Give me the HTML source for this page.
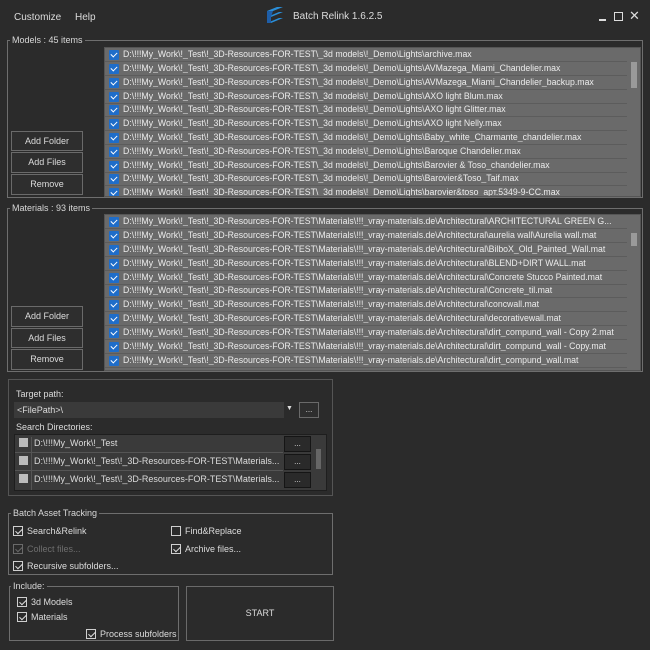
<!DOCTYPE html><html><head><style>
*{margin:0;padding:0;box-sizing:border-box}
body{width:650px;height:650px;background:#2b2b2b;font-family:"Liberation Sans",sans-serif;color:#dcdcdc;position:relative;overflow:hidden;font-size:9px}
.a{position:absolute;white-space:nowrap}
.t{white-space:nowrap;display:inline-block;transform-origin:0 50%}
.grp{position:absolute;border:1px solid #6e6e6e}
.lbl{position:absolute;background:#2b2b2b;padding:0 2px;white-space:nowrap;font-size:9px;color:#d8d8d8}
.btn{position:absolute;border:1px solid #6a6a6a;background:#2e2e2e;text-align:center;color:#dcdcdc;font-size:9px}
.list{position:absolute;background:#6a6a6a;overflow:hidden;border:1px solid #555}
.row{position:absolute;left:0;right:13px;height:14px;border-bottom:1px solid #5c5c5c}
.cb{position:absolute;left:4px;top:2px;width:10px;height:10px;background:#1f6dc9;border-radius:1px}
.cb:after{content:"";position:absolute;left:3px;top:1px;width:3px;height:5px;border:solid #fff;border-width:0 1.3px 1.3px 0;transform:rotate(45deg)}
.row .t{position:absolute;left:18px;top:1px;font-size:9px;color:#ececec;transform:scaleX(.97)}
.sb{position:absolute;right:0;top:0;bottom:0;width:13px;background:#6a6a6a}
.th{position:absolute;right:3px;width:6px;background:#9a9a9a}
.ck{position:absolute;width:10px;height:10px;border:1px solid #cfcfcf}
.ck.on:after{content:"";position:absolute;left:2.5px;top:0px;width:3px;height:6px;border:solid #e0e0e0;border-width:0 1.3px 1.3px 0;transform:rotate(45deg)}
.ck.dis{border-color:#6a6a6a}.ck.dis:after{border-color:#6a6a6a}
</style></head><body>
<div class="a" style="left:14px;top:12px;font-size:10px">Customize</div>
<div class="a" style="left:75px;top:12px;font-size:10px">Help</div>
<svg class="a" style="left:263px;top:6px" width="24" height="20" viewBox="0 0 24 20"><path d="M4 5 L14 1 L20 1 L10 5Z M4 11 L16 6 L20 6 L8 11Z M4 17 L16 12 L20 12 L8 17Z" fill="#2a8ed8"/><path d="M4 5 L10 5 L8 11 L4 11Z M4 11 L8 11 L8 17 L4 17Z" fill="#1e5ea8"/></svg>
<div class="a" style="left:293px;top:11px;font-size:10px">Batch Relink 1.6.2.5</div>
<div class="a" style="left:599px;top:19px;width:7px;height:1.5px;background:#ddd"></div>
<div class="a" style="left:614px;top:12px;width:9px;height:9px;border:1.5px solid #ddd"></div>
<div class="a" style="left:629px;top:8px;font-size:13px">✕</div>

<div class="grp" style="left:7px;top:40px;width:636px;height:158px"></div>
<div class="lbl" style="left:10px;top:35px">Models : 45 items</div>
<div class="btn" style="left:11px;top:131px;width:72px;height:20px;line-height:18px">Add Folder</div>
<div class="btn" style="left:11px;top:152px;width:72px;height:21px;line-height:19px">Add Files</div>
<div class="btn" style="left:11px;top:174px;width:72px;height:21px;line-height:19px">Remove</div>
<div class="list" style="left:104px;top:47px;width:537px;height:150px">
<div class="row" style="top:0"><i class="cb"></i><span class="t">D:\!!!My_Work\!_Test\!_3D-Resources-FOR-TEST\_3d models\!_Demo\Lights\archive.max</span></div>
<div class="row" style="top:14px"><i class="cb"></i><span class="t">D:\!!!My_Work\!_Test\!_3D-Resources-FOR-TEST\_3d models\!_Demo\Lights\AVMazega_Miami_Chandelier.max</span></div>
<div class="row" style="top:28px"><i class="cb"></i><span class="t">D:\!!!My_Work\!_Test\!_3D-Resources-FOR-TEST\_3d models\!_Demo\Lights\AVMazega_Miami_Chandelier_backup.max</span></div>
<div class="row" style="top:42px"><i class="cb"></i><span class="t">D:\!!!My_Work\!_Test\!_3D-Resources-FOR-TEST\_3d models\!_Demo\Lights\AXO light Blum.max</span></div>
<div class="row" style="top:55px"><i class="cb"></i><span class="t">D:\!!!My_Work\!_Test\!_3D-Resources-FOR-TEST\_3d models\!_Demo\Lights\AXO light Glitter.max</span></div>
<div class="row" style="top:69px"><i class="cb"></i><span class="t">D:\!!!My_Work\!_Test\!_3D-Resources-FOR-TEST\_3d models\!_Demo\Lights\AXO light Nelly.max</span></div>
<div class="row" style="top:83px"><i class="cb"></i><span class="t">D:\!!!My_Work\!_Test\!_3D-Resources-FOR-TEST\_3d models\!_Demo\Lights\Baby_white_Charmante_chandelier.max</span></div>
<div class="row" style="top:97px"><i class="cb"></i><span class="t">D:\!!!My_Work\!_Test\!_3D-Resources-FOR-TEST\_3d models\!_Demo\Lights\Baroque Chandelier.max</span></div>
<div class="row" style="top:111px"><i class="cb"></i><span class="t">D:\!!!My_Work\!_Test\!_3D-Resources-FOR-TEST\_3d models\!_Demo\Lights\Barovier &amp; Toso_chandelier.max</span></div>
<div class="row" style="top:124px"><i class="cb"></i><span class="t">D:\!!!My_Work\!_Test\!_3D-Resources-FOR-TEST\_3d models\!_Demo\Lights\Barovier&amp;Toso_Taif.max</span></div>
<div class="row" style="top:138px"><i class="cb"></i><span class="t">D:\!!!My_Work\!_Test\!_3D-Resources-FOR-TEST\_3d models\!_Demo\Lights\barovier&amp;toso_арт.5349-9-CC.max</span></div>
<div class="sb"><div class="th" style="top:14px;height:26px"></div></div>
</div>

<div class="grp" style="left:7px;top:208px;width:636px;height:164px"></div>
<div class="lbl" style="left:10px;top:203px">Materials : 93 items</div>
<div class="btn" style="left:11px;top:306px;width:72px;height:21px;line-height:19px">Add Folder</div>
<div class="btn" style="left:11px;top:328px;width:72px;height:20px;line-height:18px">Add Files</div>
<div class="btn" style="left:11px;top:349px;width:72px;height:21px;line-height:19px">Remove</div>
<div class="list" style="left:104px;top:214px;width:537px;height:157px">
<div class="row" style="top:0"><i class="cb"></i><span class="t">D:\!!!My_Work\!_Test\!_3D-Resources-FOR-TEST\Materials\!!!_vray-materials.de\Architectural\ARCHITECTURAL GREEN G...</span></div>
<div class="row" style="top:14px"><i class="cb"></i><span class="t">D:\!!!My_Work\!_Test\!_3D-Resources-FOR-TEST\Materials\!!!_vray-materials.de\Architectural\aurelia wall\Aurelia wall.mat</span></div>
<div class="row" style="top:28px"><i class="cb"></i><span class="t">D:\!!!My_Work\!_Test\!_3D-Resources-FOR-TEST\Materials\!!!_vray-materials.de\Architectural\BilboX_Old_Painted_Wall.mat</span></div>
<div class="row" style="top:42px"><i class="cb"></i><span class="t">D:\!!!My_Work\!_Test\!_3D-Resources-FOR-TEST\Materials\!!!_vray-materials.de\Architectural\BLEND+DIRT WALL.mat</span></div>
<div class="row" style="top:56px"><i class="cb"></i><span class="t">D:\!!!My_Work\!_Test\!_3D-Resources-FOR-TEST\Materials\!!!_vray-materials.de\Architectural\Concrete Stucco Painted.mat</span></div>
<div class="row" style="top:69px"><i class="cb"></i><span class="t">D:\!!!My_Work\!_Test\!_3D-Resources-FOR-TEST\Materials\!!!_vray-materials.de\Architectural\Concrete_til.mat</span></div>
<div class="row" style="top:83px"><i class="cb"></i><span class="t">D:\!!!My_Work\!_Test\!_3D-Resources-FOR-TEST\Materials\!!!_vray-materials.de\Architectural\concwall.mat</span></div>
<div class="row" style="top:97px"><i class="cb"></i><span class="t">D:\!!!My_Work\!_Test\!_3D-Resources-FOR-TEST\Materials\!!!_vray-materials.de\Architectural\decorativewall.mat</span></div>
<div class="row" style="top:111px"><i class="cb"></i><span class="t">D:\!!!My_Work\!_Test\!_3D-Resources-FOR-TEST\Materials\!!!_vray-materials.de\Architectural\dirt_compund_wall - Copy 2.mat</span></div>
<div class="row" style="top:125px"><i class="cb"></i><span class="t">D:\!!!My_Work\!_Test\!_3D-Resources-FOR-TEST\Materials\!!!_vray-materials.de\Architectural\dirt_compund_wall - Copy.mat</span></div>
<div class="row" style="top:139px"><i class="cb"></i><span class="t">D:\!!!My_Work\!_Test\!_3D-Resources-FOR-TEST\Materials\!!!_vray-materials.de\Architectural\dirt_compund_wall.mat</span></div>
<div class="row" style="top:153px"><i class="cb"></i><span class="t">D:\!!!My_Work\!_Test\!_3D-Resources-FOR-TEST\Materials\!!!_vray-materials.de\Architectural\dirt_wall.mat</span></div>
<div class="sb"><div class="th" style="top:18px;height:13px"></div></div>
</div>

<div class="grp" style="left:8px;top:379px;width:325px;height:117px;border-color:#555"></div>
<div class="a" style="left:16px;top:389px">Target path:</div>
<div class="a" style="left:14px;top:402px;width:270px;height:16px;background:#3a3a3a;padding:3px 3px">&lt;FilePath&gt;\</div>
<div class="a" style="left:286px;top:405px;font-size:7px">▼</div>
<div class="btn" style="left:299px;top:402px;width:20px;height:16px;line-height:14px;font-size:8px">...</div>
<div class="a" style="left:16px;top:422px">Search Directories:</div>
<div class="a" style="left:14px;top:434px;width:313px;height:57px;background:#3a3a3a;border:1px solid #1e1e1e"></div>
<div class="a" style="left:19px;top:438px;width:9px;height:9px;background:#bbb"></div>
<div class="a" style="left:19px;top:456px;width:9px;height:9px;background:#bbb"></div>
<div class="a" style="left:19px;top:474px;width:9px;height:9px;background:#bbb"></div>
<div class="a" style="left:31px;top:437px;width:1px;height:53px;background:#555"></div>
<div class="a" style="left:15px;top:452px;width:268px;height:1px;background:#555"></div>
<div class="a" style="left:15px;top:470px;width:268px;height:1px;background:#555"></div>
<div class="a" style="left:34px;top:438px">D:\!!!My_Work\!_Test</div>
<div class="a" style="left:34px;top:456px">D:\!!!My_Work\!_Test\!_3D-Resources-FOR-TEST\Materials...</div>
<div class="a" style="left:34px;top:474px">D:\!!!My_Work\!_Test\!_3D-Resources-FOR-TEST\Materials...</div>
<div class="btn" style="left:284px;top:436px;width:27px;height:16px;background:#2a2a2a;border-color:#151515;line-height:14px;font-size:8px">...</div>
<div class="btn" style="left:284px;top:454px;width:27px;height:16px;background:#2a2a2a;border-color:#151515;line-height:14px;font-size:8px">...</div>
<div class="btn" style="left:284px;top:472px;width:27px;height:16px;background:#2a2a2a;border-color:#151515;line-height:14px;font-size:8px">...</div>
<div class="a" style="left:316px;top:449px;width:5px;height:20px;background:#666"></div>

<div class="grp" style="left:8px;top:513px;width:325px;height:62px"></div>
<div class="lbl" style="left:11px;top:508px">Batch Asset Tracking</div>
<i class="ck on" style="left:13px;top:526px"></i><div class="a" style="left:27px;top:526px">Search&amp;Relink</div>
<i class="ck on dis" style="left:13px;top:544px"></i><div class="a" style="left:27px;top:544px;color:#6e6e6e">Collect files...</div>
<i class="ck on" style="left:13px;top:561px"></i><div class="a" style="left:27px;top:561px">Recursive subfolders...</div>
<i class="ck" style="left:171px;top:526px"></i><div class="a" style="left:185px;top:526px">Find&amp;Replace</div>
<i class="ck on" style="left:171px;top:544px"></i><div class="a" style="left:185px;top:544px">Archive files...</div>

<div class="grp" style="left:9px;top:586px;width:170px;height:55px"></div>
<div class="lbl" style="left:11px;top:581px">Include:</div>
<i class="ck on" style="left:17px;top:597px"></i><div class="a" style="left:31px;top:597px">3d Models</div>
<i class="ck on" style="left:17px;top:612px"></i><div class="a" style="left:31px;top:612px">Materials</div>
<i class="ck on" style="left:86px;top:629px"></i><div class="a" style="left:100px;top:629px">Process subfolders</div>
<div class="btn" style="left:186px;top:586px;width:148px;height:55px;line-height:53px;background:#2b2b2b">START</div>
</body></html>
